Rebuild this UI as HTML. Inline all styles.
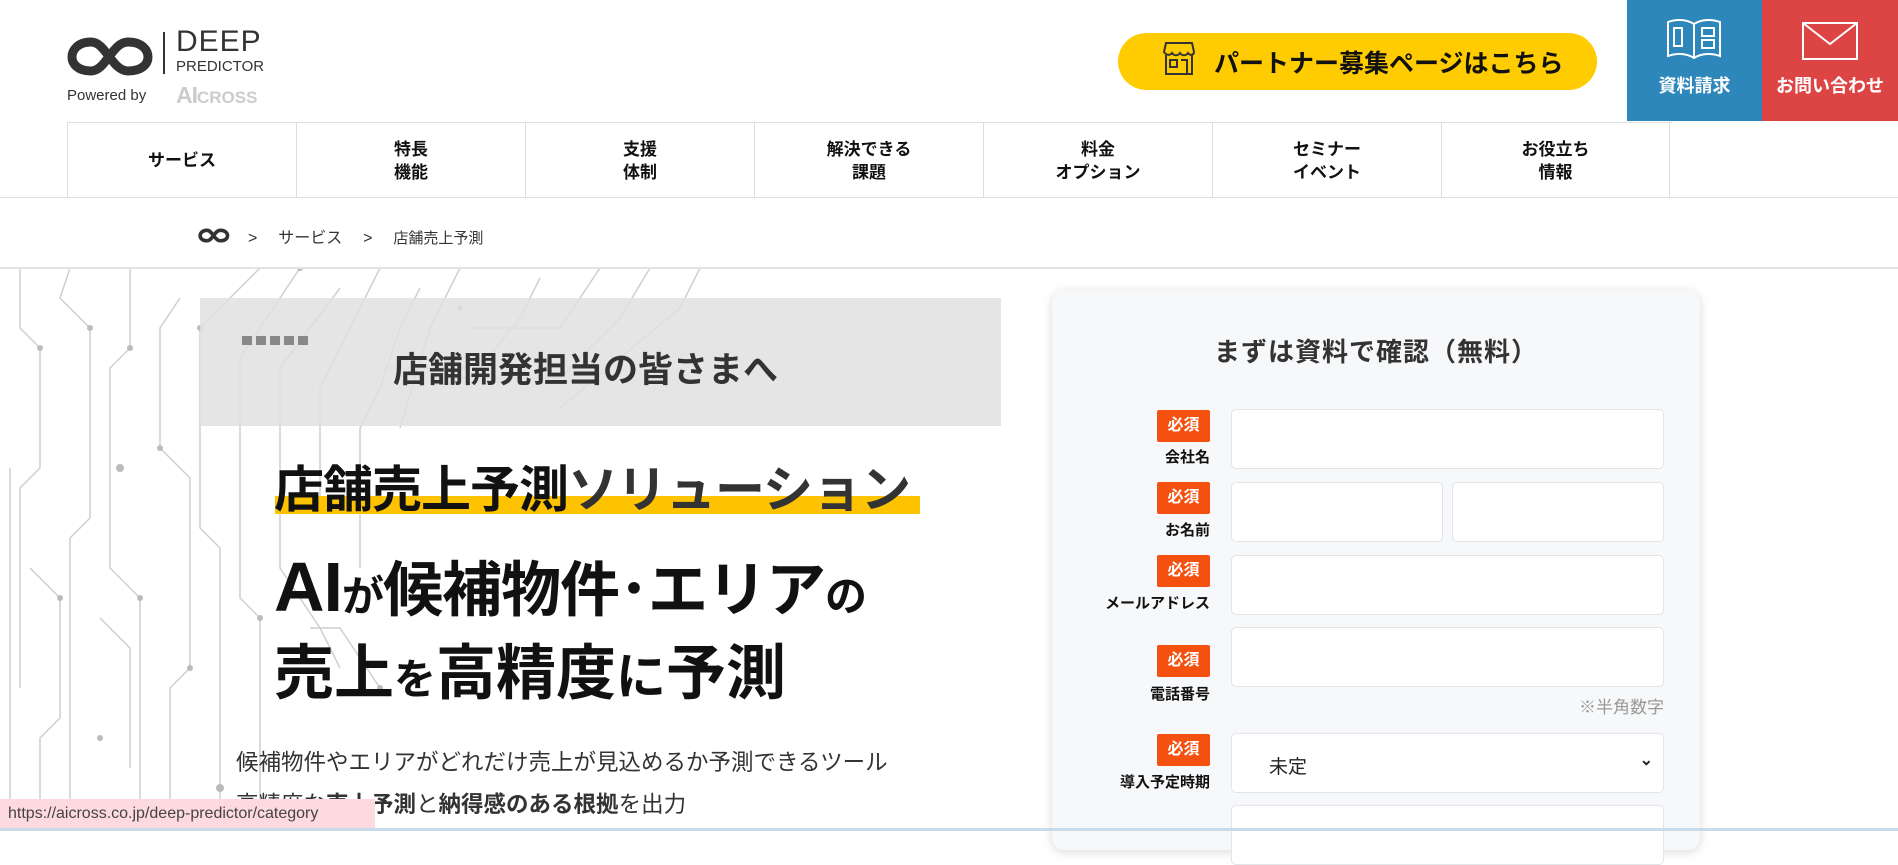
<!DOCTYPE html>
<html><head><meta charset="utf-8">
<style>
*{margin:0;padding:0;box-sizing:border-box}
body{width:1898px;height:831px;overflow:hidden;background:#fff;font-family:"Liberation Sans","Noto Sans CJK JP",sans-serif;color:#222;position:relative}
.abs{position:absolute}
.nav{left:67px;top:122px;width:1605px;height:76px;border-top:1px solid #ddd;display:flex}
.nav div{width:229px;border-left:1px solid #ddd;display:flex;align-items:center;justify-content:center;text-align:center;font-weight:bold;font-size:17px;line-height:23px;color:#111}
.nav div:last-child{border-right:1px solid #ddd}
.badge{position:absolute;left:1157px;width:53px;height:32px;background:#f4500f;color:#fff;font-weight:bold;font-size:16px;text-align:center;line-height:32px;border-radius:2px}
.lbl{position:absolute;right:688px;font-weight:bold;font-size:15px;color:#111;white-space:nowrap}
.inp{position:absolute;background:#fff;border:1px solid #e2e4e8;border-radius:5px;height:60px}
</style></head><body>
<svg class="abs" style="left:0;top:268px" width="860" height="563" viewBox="0 0 860 563">
<g stroke="#cfcfcf" stroke-width="1.5" fill="none">
<path d="M20 0 L20 60 L40 80 L40 200 L20 220 L20 420"/>
<path d="M70 0 L60 30 L90 60 L90 250 L70 270 L70 563"/>
<path d="M130 0 L130 80 L110 100 L110 300 L140 330 L140 563"/>
<path d="M180 30 L160 60 L160 180 L190 210 L190 400 L170 420 L170 563"/>
<path d="M260 0 L220 40 L200 60 L200 260 L220 280 L220 563"/>
<path d="M300 0 L260 60 L240 90 L240 330 L260 350 L260 563"/>
<path d="M340 20 L310 60 L280 100 L280 300 L320 360 L340 400"/>
<path d="M380 0 L340 80 L320 120 L320 230"/>
<path d="M420 20 L400 60 L380 120 L360 160 L360 300"/>
<path d="M460 0 L430 60 L400 160"/>
<path d="M540 10 L520 50 L480 100 L380 100"/>
<path d="M600 0 L560 60 L470 60"/>
<path d="M650 0 L620 50 L560 110 L430 110"/>
<path d="M700 0 L680 40 L560 140"/>
<path d="M30 300 L60 330 L60 450 L40 470 L40 563"/>
<path d="M10 200 L10 563"/>
<path d="M100 350 L130 380 L130 500"/>
<path d="M310 360 L340 360 L380 420"/>
</g>
<g fill="#bbb">
<circle cx="40" cy="80" r="3"/><circle cx="90" cy="60" r="3"/><circle cx="130" cy="80" r="3"/><circle cx="160" cy="180" r="3"/><circle cx="200" cy="60" r="3"/><circle cx="120" cy="200" r="4"/><circle cx="60" cy="330" r="3"/><circle cx="260" cy="350" r="3"/><circle cx="190" cy="400" r="3"/><circle cx="140" cy="330" r="3"/><circle cx="380" cy="420" r="3"/><circle cx="220" cy="520" r="4"/><circle cx="100" cy="470" r="3"/><circle cx="300" cy="0" r="3"/><circle cx="460" cy="40" r="3"/>
</g>
</svg>
<svg class="abs" style="left:66px;top:30px" width="100" height="50" viewBox="0 0 100 50"><path d="M25 12 C12 12 6 20 6 27 C6 34 12 41 25 41 C40 41 46 12 62 12 C76 12 82 20 82 27 C82 34 76 41 62 41 C46 41 40 12 25 12 Z" fill="none" stroke="#333" stroke-width="9"/></svg>
<div class="abs" style="left:163px;top:32px;width:2px;height:42px;background:#333"></div>
<div class="abs" style="left:176px;top:26px;font-size:30px;color:#333;letter-spacing:1px;line-height:32px">DEEP</div>
<div class="abs" style="left:176px;top:58px;font-size:15px;color:#333;line-height:17px">PREDICTOR</div>
<div class="abs" style="left:67px;top:87px;font-size:15px;color:#333">Powered by</div>
<div class="abs" style="left:176px;top:82px;font-size:23px;font-weight:bold;color:#ccc;letter-spacing:-1px">AI<span style="font-size:17px;letter-spacing:0">CROSS</span></div>
<div class="abs" style="left:1118px;top:33px;width:479px;height:57px;background:#fecc00;border-radius:29px"></div>
<svg class="abs" style="left:1162px;top:40px" width="34" height="36" viewBox="0 0 34 36" fill="none" stroke="#333" stroke-width="2"><path d="M4 3 H30 L32 12 C32 15 28 16 26 13 C24 16 20 16 18 13 C16 16 12 16 10 13 C8 16 4 15 2 12 Z"/><path d="M4 15 V34 H30 V15"/><path d="M8 20 H15 V27 H8 Z M19 20 H25 V34"/></svg>
<div class="abs" style="left:1214px;top:44px;font-size:25px;font-weight:bold;color:#111">パートナー募集ページはこちら</div>
<div class="abs" style="left:1627px;top:0;width:135px;height:121px;background:#2e87ba"></div>
<svg class="abs" style="left:1664px;top:16px" width="60" height="44" viewBox="0 0 60 44" fill="none" stroke="#fff" stroke-width="2"><path d="M30 8 C22 3 12 3 4 6 V40 C12 37 22 37 30 42 C38 37 48 37 56 40 V6 C48 3 38 3 30 8 Z M30 8 V42"/><path d="M10 12 H18 V30 H10 Z M38 12 H50 V20 H38 Z M38 24 H50 V32 H38 Z"/></svg>
<div class="abs" style="left:1627px;top:72px;width:135px;text-align:center;color:#fff;font-weight:bold;font-size:18px">資料請求</div>
<div class="abs" style="left:1762px;top:0;width:136px;height:121px;background:#dd4444"></div>
<svg class="abs" style="left:1802px;top:22px" width="56" height="38" viewBox="0 0 56 38" fill="none" stroke="#fff" stroke-width="2"><path d="M1 1 H55 V37 H1 Z M1 1 L28 22 L55 1"/></svg>
<div class="abs" style="left:1762px;top:72px;width:136px;text-align:center;color:#fff;font-weight:bold;font-size:18px">お問い合わせ</div>
<div class="abs nav"><div>サービス</div><div>特長<br>機能</div><div>支援<br>体制</div><div>解決できる<br>課題</div><div>料金<br>オプション</div><div>セミナー<br>イベント</div><div>お役立ち<br>情報</div></div>
<div class="abs" style="left:0;top:197px;width:1898px;height:1px;background:#ddd"></div>
<svg class="abs" style="left:198px;top:225px" width="36" height="20" viewBox="0 0 100 50"><path d="M25 12 C12 12 6 20 6 27 C6 34 12 41 25 41 C40 41 46 12 62 12 C76 12 82 20 82 27 C82 34 76 41 62 41 C46 41 40 12 25 12 Z" fill="none" stroke="#333" stroke-width="10"/></svg>
<div class="abs" style="left:248px;top:224px;font-size:16px;color:#333;word-spacing:6px">&gt;&nbsp; サービス &nbsp;&gt;&nbsp; <span style="font-size:15px">店舗売上予測</span></div>
<div class="abs" style="left:0;top:267px;width:1898px;height:2px;background:#e3e3e3"></div>
<div class="abs" style="left:200px;top:298px;width:801px;height:128px;background:rgba(225,225,225,0.85)"></div>
<div class="abs" style="left:242px;top:336px;width:70px;height:9px;background:repeating-linear-gradient(90deg,#888 0 10px,transparent 10px 14px)"></div>
<div class="abs" style="left:393px;top:342px;font-size:35px;font-weight:bold;color:#333">店舗開発担当の皆さまへ</div>
<div class="abs" style="left:275px;top:496px;width:645px;height:18px;background:#fec300"></div>
<div class="abs" style="left:274px;top:450px;font-size:50px;font-weight:bold;color:#111;letter-spacing:-1px;white-space:nowrap">店舗売上予測<span style="color:#333">ソリューション</span></div>
<div class="abs" style="left:274px;top:542px;font-size:60px;font-weight:bold;color:#111;white-space:nowrap;letter-spacing:-1px"><span style="font-size:70px">AI</span><span style="font-size:42px">が</span>候補物件･エリア<span style="font-size:42px">の</span></div>
<div class="abs" style="left:274px;top:625px;font-size:60px;font-weight:bold;color:#111;white-space:nowrap">売上<span style="font-size:42px">を</span>高精度<span style="font-size:50px">に</span>予測</div>
<div class="abs" style="left:236px;top:745px;font-size:22.5px;color:#333;white-space:nowrap">候補物件やエリアがどれだけ売上が見込めるか予測できるツール</div>
<div class="abs" style="left:236px;top:787px;font-size:22.5px;color:#333;white-space:nowrap">高精度な<b>売上予測</b>と<b>納得感のある根拠</b>を出力</div>
<div class="abs" style="left:0;top:799px;width:375px;height:30px;background:#fdd9e0;font-size:16px;color:#444;padding:6px 0 0 8px">https://aicross.co.jp/deep-predictor/category</div>
<div class="abs" style="left:1052px;top:290px;width:648px;height:560px;background:#f7f8fa;border-radius:12px;box-shadow:0 2px 10px rgba(0,0,0,0.15)"></div>
<div class="abs" style="left:1052px;top:332px;width:648px;text-align:center;font-size:26px;font-weight:bold;color:#333;letter-spacing:1px">まずは資料で確認（無料）</div>
<div class="badge" style="top:410px">必須</div><div class="lbl" style="top:446px">会社名</div>
<div class="inp" style="left:1231px;top:409px;width:433px"></div>
<div class="badge" style="top:482px">必須</div><div class="lbl" style="top:519px">お名前</div>
<div class="inp" style="left:1231px;top:482px;width:212px"></div><div class="inp" style="left:1452px;top:482px;width:212px"></div>
<div class="badge" style="top:555px">必須</div><div class="lbl" style="top:592px">メールアドレス</div>
<div class="inp" style="left:1231px;top:555px;width:433px"></div>
<div class="badge" style="top:645px">必須</div><div class="lbl" style="top:683px">電話番号</div>
<div class="inp" style="left:1231px;top:627px;width:433px"></div>
<div class="abs" style="right:234px;top:693px;font-size:17px;color:#999">※半角数字</div>
<div class="badge" style="top:734px">必須</div><div class="lbl" style="top:771px">導入予定時期</div>
<div class="inp" style="left:1231px;top:733px;width:433px"><span style="position:absolute;left:37px;top:18px;font-size:19px;color:#222">未定</span><span style="position:absolute;right:10px;top:16px;font-size:16px;font-weight:bold">&#8964;</span></div>
<div class="inp" style="left:1231px;top:805px;width:433px"></div>
<div class="abs" style="left:0;top:828px;width:1898px;height:3px;background:#c9dbe8"></div>
</body></html>
